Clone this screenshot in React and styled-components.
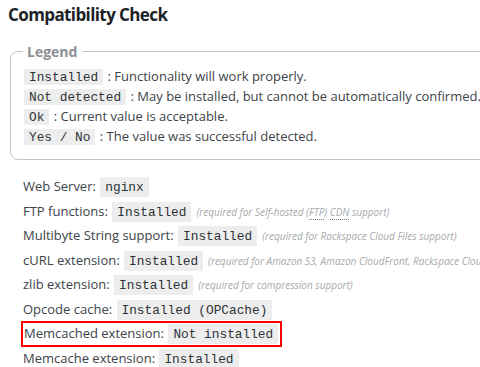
import React from 'react';
import styled, { createGlobalStyle } from 'styled-components';

const GlobalStyle = createGlobalStyle`
  html, body {
    margin: 0;
    padding: 0;
    background: #fff;
    overflow: hidden;
  }
  body {
    font-family: "Open Sans", "Noto Sans", sans-serif;
    font-size: 13px;
    color: #3c434a;
  }
`

const Page = styled.div`
  width: 640px;
  padding: 0 8px;
`

const Title = styled.h2`
  margin: 5px 0 0;
  font-size: 17px;
  line-height: 20px;
  font-weight: 700;
  letter-spacing: -0.6px;
  color: #1d2327;
`

const Fieldset = styled.fieldset`
  margin: 17px 0 0 2px;
  padding: 6px 12px 12px;
  border: 1px solid #c3c4c7;
  border-radius: 8px;
`

const Legend = styled.legend`
  margin-left: 0;
  padding: 0 5px 0 4px;
  font-weight: 700;
  color: #8c8f94;
  font-size: 14px;
`

const LegendRow = styled.div`
  line-height: 19px;
  white-space: nowrap;
`

const Code = styled.code`
  font-family: "Liberation Mono", "DejaVu Sans Mono", monospace;
  font-size: 12.8px;
  padding: ${p => (p.$tight ? '1px 5px 0' : '3px 5px 2px')};
  margin: 0 1px;
  background: rgba(0, 0, 0, 0.07);
  color: #2c3338;
`

const List = styled.ul`
  list-style: none;
  margin: 16px 0 0;
  padding: 0 0 0 15px;
`

const Item = styled.li`
  height: 20px;
  line-height: 20px;
  margin-bottom: 4.6px;
  white-space: nowrap;
`

const Note = styled.span`
  font-size: 10px;
  font-style: italic;
  color: #a7aaad;
  margin-left: 4px;
`

const Abbr = styled.abbr`
  text-decoration: none;
  border-bottom: 1px dotted #787c82;
`

const Flagged = styled.span`
  display: inline-block;
  vertical-align: top;
  margin: -3px 0 0 -2px;
  padding: 1px 1px;
  line-height: 19px;
  border: 2px solid #f00;
`

const legend = [
  ['Installed', 'Functionality will work properly.'],
  ['Not detected', 'May be installed, but cannot be automatically confirmed.'],
  ['Ok', 'Current value is acceptable.'],
  ['Yes / No', 'The value was successful detected.'],
];

export default function App() {
  return (
    <Page>
      <GlobalStyle />
      <Title>Compatibility Check</Title>
      <Fieldset>
        <Legend>Legend</Legend>
        {legend.map(([code, text]) => (
          <LegendRow key={code}>
            <Code $tight>{code}</Code> : {text}
          </LegendRow>
        ))}
      </Fieldset>
      <List>
        <Item>Web Server: <Code>nginx</Code></Item>
        <Item>
          FTP functions: <Code>Installed</Code>
          <Note>(required for Self-hosted (<Abbr>FTP</Abbr>) <Abbr>CDN</Abbr> support)</Note>
        </Item>
        <Item>
          Multibyte String support: <Code>Installed</Code>
          <Note>(required for Rackspace Cloud Files support)</Note>
        </Item>
        <Item>
          cURL extension: <Code>Installed</Code>
          <Note>(required for Amazon S3, Amazon CloudFront, Rackspace CloudFiles support)</Note>
        </Item>
        <Item>
          zlib extension: <Code>Installed</Code>
          <Note>(required for compression support)</Note>
        </Item>
        <Item>Opcode cache: <Code>Installed (OPCache)</Code></Item>
        <Item>
          <Flagged>Memcached extension: <Code>Not installed</Code></Flagged>
        </Item>
        <Item>Memcache extension: <Code>Installed</Code></Item>
      </List>
    </Page>
  );
}
